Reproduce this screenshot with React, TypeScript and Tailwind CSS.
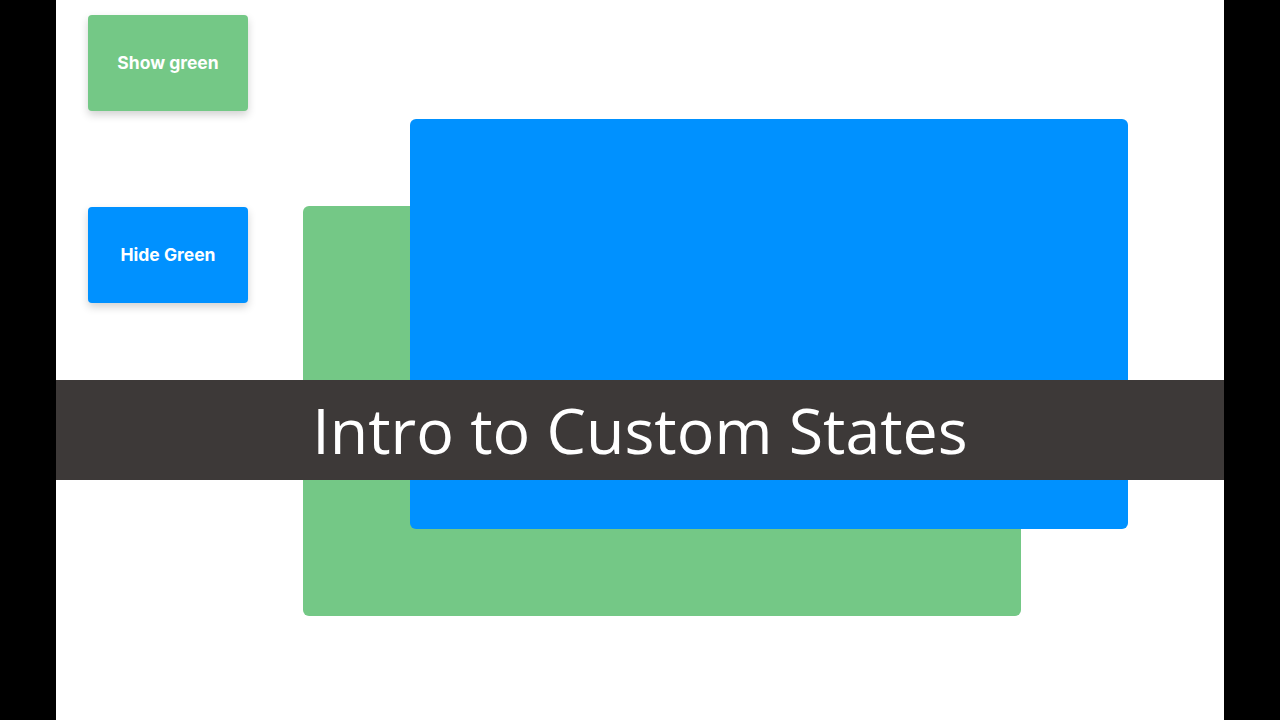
export default function App() {
  return (
    <div className="flex h-[720px] w-[1280px] bg-black">
      <div className="w-[56px] shrink-0 bg-black" />
      <div className="relative h-full w-[1168px] overflow-hidden bg-white">
        {/* control buttons */}
        <div className="flex flex-col gap-[96px] pl-[32px] pt-[15px]">
          <button
            className="flex h-[96px] w-[160px] items-center justify-center rounded-[4px] bg-[#74c886] text-[17.5px] font-bold text-white shadow-[0_4px_8px_rgba(0,0,0,0.18)]"
            style={{ fontFamily: "Inter, 'Noto Sans', sans-serif" }}
          >
            Show green
          </button>
          <button
            className="flex h-[96px] w-[160px] items-center justify-center rounded-[4px] bg-[#0091ff] text-[17.5px] font-bold text-white shadow-[0_4px_8px_rgba(0,0,0,0.18)]"
            style={{ fontFamily: "Inter, 'Noto Sans', sans-serif" }}
          >
            Hide Green
          </button>
        </div>

        {/* stacked panels */}
        <div className="absolute left-[247px] top-[206px] h-[410px] w-[718px] rounded-[6px] bg-[#74c886]" />
        <div className="absolute left-[354px] top-[119px] h-[410px] w-[718px] rounded-[6px] bg-[#0091ff]" />

        {/* title banner */}
        <div className="absolute left-0 top-[380px] flex h-[100px] w-full items-center justify-center bg-[#3d3938]">
          <span
            className="text-[62.7px] leading-none text-white"
            style={{ fontFamily: "'Open Sans', 'Noto Sans', sans-serif" }}
          >
            Intro to Custom States
          </span>
        </div>
      </div>
      <div className="w-[56px] shrink-0 bg-black" />
    </div>
  );
}
